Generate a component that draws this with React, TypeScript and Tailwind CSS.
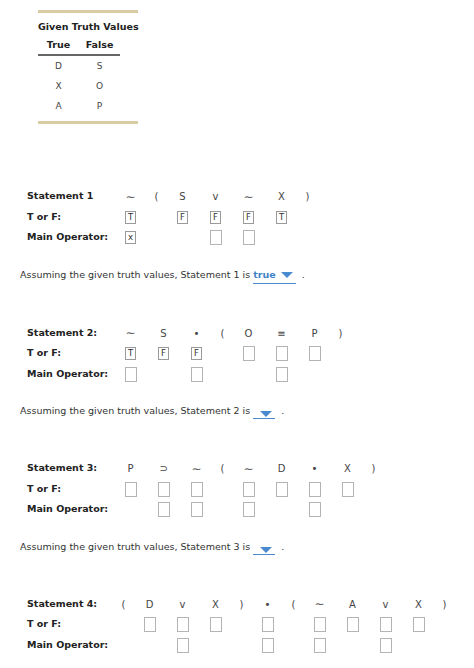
import React from "react";

type Tok = { s: string; paren?: boolean; tf?: string; mo?: string };

const P = (s: string): Tok => ({ s, paren: true });

const statements: { label: string; answer: string; tokens: Tok[] }[] = [
  {
    label: "Statement 1",
    answer: "true",
    tokens: [
      { s: "∼", tf: "T", mo: "x" },
      P("("),
      { s: "S", tf: "F" },
      { s: "v", tf: "F", mo: "" },
      { s: "∼", tf: "F", mo: "" },
      { s: "X", tf: "T" },
      P(")"),
    ],
  },
  {
    label: "Statement 2:",
    answer: "",
    tokens: [
      { s: "∼", tf: "T", mo: "" },
      { s: "S", tf: "F" },
      { s: "•", tf: "F", mo: "" },
      P("("),
      { s: "O", tf: "" },
      { s: "≡", tf: "", mo: "" },
      { s: "P", tf: "" },
      P(")"),
    ],
  },
  {
    label: "Statement 3:",
    answer: "",
    tokens: [
      { s: "P", tf: "" },
      { s: "⊃", tf: "", mo: "" },
      { s: "∼", tf: "", mo: "" },
      P("("),
      { s: "∼", tf: "", mo: "" },
      { s: "D", tf: "" },
      { s: "•", tf: "", mo: "" },
      { s: "X", tf: "" },
      P(")"),
    ],
  },
  {
    label: "Statement 4:",
    answer: "",
    tokens: [
      P("("),
      { s: "D", tf: "" },
      { s: "v", tf: "", mo: "" },
      { s: "X", tf: "" },
      P(")"),
      { s: "•", tf: "", mo: "" },
      P("("),
      { s: "∼", tf: "", mo: "" },
      { s: "A", tf: "" },
      { s: "v", tf: "", mo: "" },
      { s: "X", tf: "" },
      P(")"),
    ],
  },
];

function Box({ value }: { value?: string }) {
  if (value === undefined) return null;
  if (value === "") {
    return <div className="h-[15px] w-[12px] border border-[#b4b4b4] bg-white" />;
  }
  return (
    <div className="flex h-[13px] w-[11px] items-center justify-center border border-[#9a9a9a] text-[8.5px] leading-none text-[#333]">
      {value}
    </div>
  );
}

function Dropdown({ value }: { value: string }) {
  return (
    <span className="mr-[3px] inline-flex items-center gap-[5px] border-b border-[#4a8bd0] pb-[1px] align-baseline">
      {value ? (
        <span className="font-bold text-[#3d82c8]">{value}</span>
      ) : (
        <span className="w-[2px]" />
      )}
      <svg width="12" height="6" viewBox="0 0 12 6" className="mr-[3px]">
        <path d="M0 0 H12 L6 6 Z" fill="#4a8bd0" />
      </svg>
    </span>
  );
}

function Statement({ label, answer, tokens, last }: { label: string; answer: string; tokens: Tok[]; last?: boolean }) {
  const n = label.replace(/[^0-9]/g, "");
  return (
    <div className={last ? "" : "mb-[39px]"}>
      <div className="flex pl-[27px]">
        <div className="w-[87px] shrink-0 whitespace-nowrap text-[9.5px] font-bold text-[#222]">
          <div className="flex h-[20.5px] items-center">{label}</div>
          <div className="flex h-[20.5px] items-center">T or F:</div>
          <div className="flex h-[20.5px] items-center">Main Operator:</div>
        </div>
        {tokens.map((t, i) => (
          <div key={i} className={t.paren ? "w-[19px] shrink-0" : "w-[33px] shrink-0"}>
            <div
              className={
                t.s === "∼"
                  ? "flex h-[20.5px] items-center justify-center text-[12px] text-[#555]"
                  : "flex h-[20.5px] items-center justify-center text-[10px] text-[#444]"
              }
            >
              {t.s}
            </div>
            <div className="flex h-[20.5px] items-center justify-center">
              <Box value={t.tf} />
            </div>
            <div className="flex h-[20.5px] items-center justify-center">
              <Box value={t.mo} />
            </div>
          </div>
        ))}
      </div>
      {!last && (
        <p className="mt-[20px] whitespace-nowrap pl-[20px] text-[9.5px] leading-[14px] text-[#333]">
          Assuming the given truth values, Statement {n} is{" "}
          <Dropdown value={answer} /> .
        </p>
      )}
    </div>
  );
}

export default function App() {
  return (
    <div className="h-[668px] w-[474px] overflow-hidden bg-white font-['DejaVu_Sans',sans-serif]">
      <div className="ml-[38px] w-[100px] pt-[10px]">
        <div className="h-[3px] bg-[#d8cca4]" />
        <div className="mt-[7px] h-[14px] whitespace-nowrap text-[9.5px] font-bold leading-[14px] text-[#222]">
          Given Truth Values
        </div>
        <div className="w-[82px]">
          <div className="mt-[4px] flex border-b-2 border-[#666] pb-[2px] text-[9.5px] font-bold text-[#222]">
            <div className="w-[41px] text-center">True</div>
            <div className="w-[41px] text-center">False</div>
          </div>
          {[
            ["D", "S"],
            ["X", "O"],
            ["A", "P"],
          ].map(([a, b]) => (
            <div key={a} className="flex h-[20px] items-center text-[9px] text-[#444]">
              <div className="w-[41px] text-center">{a}</div>
              <div className="w-[41px] text-center">{b}</div>
            </div>
          ))}
        </div>
        <div className="mt-[5px] h-[3px] bg-[#d8cca4]" />
      </div>
      <div className="mt-[62px]">
        {statements.map((s, i) => (
          <Statement key={i} {...s} last={i === statements.length - 1} />
        ))}
      </div>
    </div>
  );
}
